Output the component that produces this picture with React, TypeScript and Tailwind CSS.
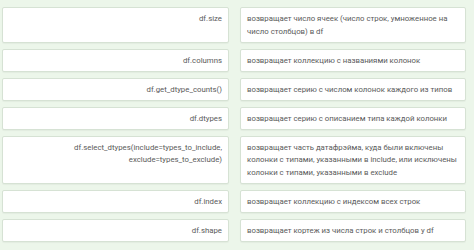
const rows: { name: string; desc: string }[] = [
  { name: 'df.size', desc: 'возвращает число ячеек (число строк, умноженное на число столбцов) в df' },
  { name: 'df.columns', desc: 'возвращает коллекцию с названиями колонок' },
  { name: 'df.get_dtype_counts()', desc: 'возвращает серию с числом колонок каждого из типов' },
  { name: 'df.dtypes', desc: 'возвращает серию с описанием типа каждой колонки' },
  {
    name: 'df.select_dtypes(include=types_to_include, exclude=types_to_exclude)',
    desc: 'возвращает часть датафрэйма, куда были включены колонки с типами, указанными в include, или исключены колонки с типами, указанными в exclude',
  },
  { name: 'df.index', desc: 'возвращает коллекцию с индексом всех строк' },
  { name: 'df.shape', desc: 'возвращает кортеж из числа строк и столбцов у df' },
]

export default function App() {
  return (
    <div className="h-[250px] w-[474px] overflow-hidden bg-[#ecf6ea] pl-[2px] pr-[8px] pt-[7px] font-['Roboto',sans-serif] text-[7.8px] leading-[12.5px] text-[#5a5a5a]">
      <div className="grid grid-cols-[227px_226px] gap-x-[11px] gap-y-[5.5px]">
        {rows.map((r) => (
          <>
            <div key={r.name} className="rounded-[2px] border border-[#d6e2d4] bg-white px-[6px] pb-[4px] pt-[5px] text-right shadow-[0_1px_1px_rgba(0,0,0,0.04)]">
              {r.name}
            </div>
            <div key={r.desc} className="rounded-[2px] border border-[#d6e2d4] bg-white px-[6px] pb-[4px] pt-[5px] shadow-[0_1px_1px_rgba(0,0,0,0.04)]">
              {r.desc}
            </div>
          </>
        ))}
      </div>
    </div>
  )
}
